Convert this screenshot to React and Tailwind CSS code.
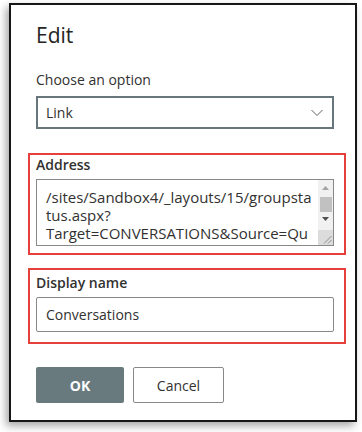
import { useState } from 'react'

export default function App() {
  const [option] = useState('Link')
  const [name, setName] = useState('Conversations')

  return (
    <div className="w-[362px] h-[432px] bg-white overflow-hidden pt-[3px] pl-[9px] font-['Open_Sans',sans-serif] text-[#323130]">
      <div className="w-[348px] h-[419px] border-2 border-[#161616] bg-white shadow-[-3px_4px_8px_rgba(0,0,0,0.35)] flex flex-col">
        {/* Title */}
        <h1 className="mt-[16px] pl-[25px] text-[21px] leading-[28px] font-normal text-[#252423]">Edit</h1>

        {/* Dropdown */}
        <div className="mt-[21px] pl-[25px] w-[323px]">
          <p className="text-[14px] leading-[20px]">Choose an option</p>
          <div className="mt-[6px] h-[33px] border-2 border-[#66767a] flex items-center justify-between pl-[8px] pr-[8px]">
            <span className="text-[14px] leading-[20px]">{option}</span>
            <svg width="12" height="8" viewBox="0 0 12 8" className="mr-[1px]">
              <polyline points="0.5,1 6,6.5 11.5,1" fill="none" stroke="#605e5c" strokeWidth="1" />
            </svg>
          </div>
        </div>

        {/* Address (highlighted) */}
        <div className="mt-[24px] ml-[17px] w-[318px] border-2 border-[#e5403b] pl-[6px] pr-[10px] pb-[7px]">
          <p className="text-[14px] leading-[20px] font-semibold">Address</p>
          <div className="mt-[4px] h-[67px] border border-[#8a8886] flex">
            <div className="flex-1 overflow-hidden pl-[9px] pt-[8px] text-[15px] leading-[18px] whitespace-nowrap">
              <div>/sites/Sandbox4/_layouts/15/groupsta</div>
              <div>tus.aspx?</div>
              <div>Target=CONVERSATIONS&amp;Source=Qu</div>
              <div>ickLaunch</div>
            </div>
            <div className="w-[15px] bg-[#f1f1f1] flex flex-col items-center">
              <div className="h-[15px] w-full flex items-center justify-center">
                <svg width="7" height="4" viewBox="0 0 7 4"><polygon points="3.5,0 7,4 0,4" fill="#a3a3a3" /></svg>
              </div>
              <div className="mt-[2px] h-[15px] w-[12px] bg-[#c1c1c1]" />
              <div className="h-[14px] w-full flex items-center justify-center">
                <svg width="7" height="4" viewBox="0 0 7 4"><polygon points="0,0 7,0 3.5,4" fill="#505050" /></svg>
              </div>
              <div className="mt-auto h-[15px] w-full bg-[#dcdcdc] flex items-end justify-end p-[1px]">
                <svg width="9" height="9" viewBox="0 0 9 9">
                  <line x1="1" y1="8.5" x2="8.5" y2="1" stroke="#8f8f8f" strokeWidth="1" />
                  <line x1="5" y1="8.5" x2="8.5" y2="5" stroke="#8f8f8f" strokeWidth="1" />
                </svg>
              </div>
            </div>
          </div>
        </div>

        {/* Display name (highlighted) */}
        <div className="mt-[13px] ml-[17px] w-[318px] border-2 border-[#e5403b] pl-[6px] pr-[10px] pt-[3px] pb-[10px]">
          <p className="text-[14px] leading-[20px] font-semibold">Display name</p>
          <input
            value={name}
            onChange={e => setName(e.target.value)}
            className="mt-[4px] w-full h-[35px] border border-[#8a8886] rounded-[2px] px-[9px] text-[14px] outline-none text-[#323130]"
          />
        </div>

        {/* Buttons */}
        <div className="mt-[23px] pl-[25px] flex gap-[9px]">
          <button className="w-[88px] h-[36px] bg-[#697a7e] rounded-[2px] text-white text-[14px] font-bold">OK</button>
          <button className="w-[91px] h-[36px] bg-white border border-[#8a8886] rounded-[2px] text-[14px] text-[#323130]">Cancel</button>
        </div>
      </div>
    </div>
  )
}
